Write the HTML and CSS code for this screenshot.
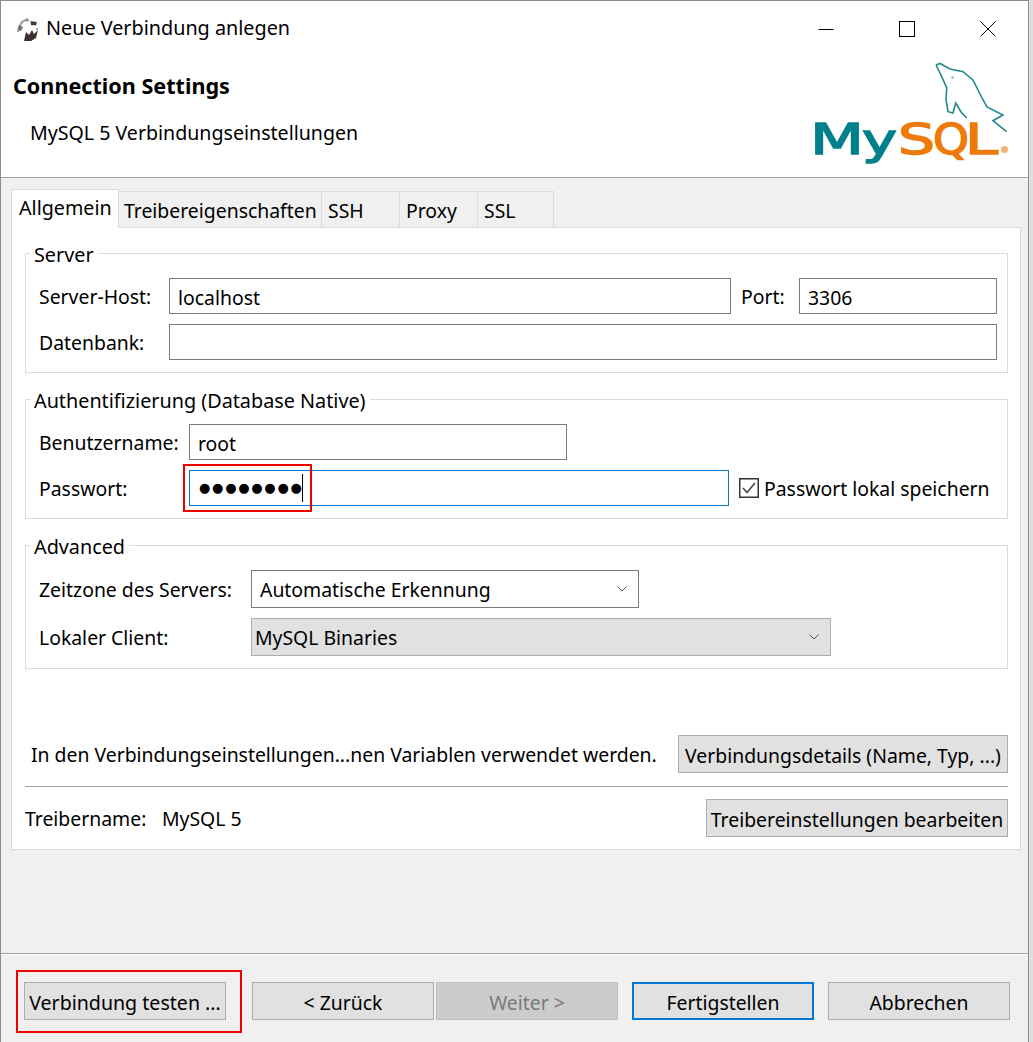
FILE: index.html
```html
<!DOCTYPE html>
<html lang="de">
<head>
<meta charset="utf-8">
<title>Neue Verbindung anlegen</title>
<link rel="stylesheet" href="styles.css">
</head>
<body>
<div class="window">
  <header class="header">
    <div class="titlebar">
      <svg class="app-icon" viewBox="0 0 24 24" width="24" height="24" aria-hidden="true">
        <path d="M3 15 L4 10 L7 5 L13 1.5" fill="none" stroke="#9a9a9a" stroke-width="2"/>
        <path d="M4 8 L8 10 L6 14 L3 13 Z" fill="#6f6f6f"/>
        <path d="M10 3 L15 3 L12 5 Z" fill="#8a8a8a"/>
        <path d="M15.5 4 L22 5 L21 8.5 L16 8 Z" fill="#45403e"/>
        <path d="M9 24 L11 15 L14 18 L17 13 L19 17 L23 13 L21 21 L16 24 Z" fill="#3b3331"/>
        <path d="M21 11 L23 11 L23 13 L21 13 Z" fill="#a9a9a9"/>
      </svg>
      <span class="title">Neue Verbindung anlegen</span>
      <div class="controls">
        <svg class="ctl" viewBox="0 0 16 16" width="16" height="16" aria-hidden="true"><path d="M0.5 8.5 H15.5" stroke="#000" fill="none"/></svg>
        <svg class="ctl" viewBox="0 0 16 16" width="16" height="16" aria-hidden="true"><rect x="0.5" y="0.5" width="15" height="15" stroke="#000" fill="none"/></svg>
        <svg class="ctl" viewBox="0 0 16 16" width="16" height="16" aria-hidden="true"><path d="M0.5 0.5 L15.5 15.5 M15.5 0.5 L0.5 15.5" stroke="#000" fill="none"/></svg>
      </div>
    </div>
    <div class="banner">
      <div class="banner-text">
        <h1 class="heading">Connection Settings</h1>
        <p class="subtitle">MySQL 5 Verbindungseinstellungen</p>
      </div>
      <svg class="logo" viewBox="810 60 202 110" width="202" height="110" aria-label="MySQL">
        <path d="M936 65 L940 63.5 L950 69 L963 71.7 L973 80 L982 98 L987 107 L1003 115 L993 120.7 L1006.7 131.7" fill="none" stroke="#1f8a8a" stroke-width="1.6"/>
        <path d="M936 65 L941 75 L946.7 88 L946 100 L948 111.7 L953 113 L955.7 103 L961 112 L966.7 118" fill="none" stroke="#1f8a8a" stroke-width="1.6"/>
        <circle cx="952.5" cy="77.5" r="1.2" fill="#6fb8b8"/>
        <text class="logo-my" x="810" y="154" textLength="54" lengthAdjust="spacingAndGlyphs">M</text>
        <text class="logo-my" x="862" y="154" textLength="35" lengthAdjust="spacingAndGlyphs">y</text>
        <text class="logo-sql" x="898" y="154" textLength="37" lengthAdjust="spacingAndGlyphs">S</text>
        <text class="logo-sql" x="933" y="154" textLength="36" lengthAdjust="spacingAndGlyphs">Q</text>
        <text class="logo-sql" x="965" y="154" textLength="33" lengthAdjust="spacingAndGlyphs">L</text>
        <circle cx="1004.5" cy="149.5" r="3.5" fill="#f3b27a"/>
      </svg>
    </div>
  </header>

  <div class="folder">
    <div class="tabs">
      <div class="tab tab-active w-general">Allgemein</div>
      <div class="tab w-driver">Treibereigenschaften</div>
      <div class="tab w-short">SSH</div>
      <div class="tab w-short">Proxy</div>
      <div class="tab w-ssl">SSL</div>
    </div>
    <div class="panel">
      <section class="group">
        <div class="legend">Server</div>
        <div class="server-grid">
          <label class="label">Server-Host:</label>
          <div class="input">localhost</div>
          <label class="label label-port">Port:</label>
          <div class="input input-port">3306</div>
          <label class="label">Datenbank:</label>
          <div class="input span-3"></div>
        </div>
      </section>

      <section class="group">
        <div class="legend">Authentifizierung (Database Native)</div>
        <div class="rows">
          <div class="row">
            <label class="label w-auth">Benutzername:</label>
            <div class="input w-user">root</div>
          </div>
          <div class="row">
            <label class="label w-auth">Passwort:</label>
            <div class="input input-focus w-pass"><span class="dots">●●●●●●●●</span><span class="caret"></span></div>
            <span class="checkbox">
              <svg viewBox="0 0 20 20" width="20" height="20" aria-hidden="true"><rect x="0.75" y="0.75" width="18.5" height="18.5" fill="#fff" stroke="#333" stroke-width="1.5"/><path d="M4 10 L8 14.5 L16 5" fill="none" stroke="#444" stroke-width="1.5"/></svg>
            </span>
            <span class="check-label">Passwort lokal speichern</span>
          </div>
        </div>
      </section>

      <section class="group">
        <div class="legend">Advanced</div>
        <div class="rows">
          <div class="row">
            <label class="label w-adv">Zeitzone des Servers:</label>
            <div class="combo w-tz">Automatische Erkennung
              <svg class="chev" viewBox="0 0 10 6" width="10" height="6" aria-hidden="true"><path d="M0.5 0.5 L5 5 L9.5 0.5" fill="none" stroke="#555"/></svg>
            </div>
          </div>
          <div class="row">
            <label class="label w-adv">Lokaler Client:</label>
            <div class="combo combo-gray w-client">MySQL Binaries
              <svg class="chev" viewBox="0 0 10 6" width="10" height="6" aria-hidden="true"><path d="M0.5 0.5 L5 5 L9.5 0.5" fill="none" stroke="#555"/></svg>
            </div>
          </div>
        </div>
      </section>

      <div class="info-row">
        <span class="info">In den Verbindungseinstellungen...nen Variablen verwendet werden.</span>
        <button class="btn w-details">Verbindungsdetails (Name, Typ, ...)</button>
      </div>
      <hr class="sep">
      <div class="driver-row">
        <span class="driver-key">Treibername:</span>
        <span class="driver-val">MySQL 5</span>
        <button class="btn w-edit">Treibereinstellungen bearbeiten</button>
      </div>
    </div>
  </div>

  <footer class="footer">
    <button class="btn w-test">Verbindung testen ...</button>
    <button class="btn w-nav m-back">&lt; Zurück</button>
    <button class="btn w-nav btn-disabled m-next">Weiter &gt;</button>
    <button class="btn w-nav btn-default m-finish">Fertigstellen</button>
    <button class="btn w-nav m-finish">Abbrechen</button>
  </footer>

  <div class="mark mark-pass"></div>
  <div class="mark mark-test"></div>
</div>
</body>
</html>
```
FILE: styles.css
```css
* { box-sizing: border-box; }
html, body { margin: 0; padding: 0; }
html { background: #dedede; }
body {
  min-width: 1033px;
  font-family: "Noto Sans", "Open Sans", sans-serif;
  font-size: 19.4px;
  color: #000;
}
.window {
  position: relative;
  width: 1029px;
  height: 1042px;
  overflow: hidden;
  background: #f0f0f0;
  border: 1px solid #8c8c8c;
  border-bottom: 0;
  display: flex;
  flex-direction: column;
}

/* header */
.header { background: #fff; border-bottom: 1px solid #a0a0a0; height: 177px; flex: none; }
.titlebar { display: flex; align-items: center; height: 56px; padding-left: 14px; }
.app-icon { flex: none; margin-right: 7px; }
.title { font-size: 19.8px; line-height: 24px; margin-top: -2px; }
.controls { margin-left: auto; display: flex; gap: 65px; padding-right: 32px; }
.ctl { display: block; }
.banner { display: flex; justify-content: space-between; height: 120px; }
.banner-text { padding: 15px 0 0 12px; }
.heading { margin: 0; font-size: 21.6px; font-weight: 700; line-height: 28px; }
.subtitle { margin: 19px 0 0 17px; line-height: 28px; font-size: 19.6px; }
.logo { margin: 3px 16px 0 0; flex: none; }
.logo text { font-family: "DejaVu Sans", sans-serif; font-size: 42px; stroke-width: 1.4px; }
.logo-my { fill: #00808a; stroke: #00808a; }
.logo-sql { fill: #ee7a0a; stroke: #ee7a0a; }

/* tabs */
.folder { margin: 11px 0 0 10px; width: 1010px; flex: none; }
.tabs { display: flex; align-items: flex-end; height: 38px; position: relative; z-index: 1; }
.tab {
  height: 36px;
  margin-bottom: 0;
  padding: 5px 0 0 6px;
  background: #f0f0f0;
  border: 1px solid #dcdcdc;
  border-left: 0;
  border-bottom: 0;
  line-height: 28px;
}
.tab-active {
  height: 39px;
  margin-bottom: -1px;
  padding: 4px 0 0 7px;
  background: #fff;
  border-left: 1px solid #dcdcdc;
}
.w-general { width: 108px; font-size: 19.7px; }
.w-driver { width: 203px; padding-left: 5px; }
.w-short { width: 78px; }
.w-ssl { width: 76px; }

.panel {
  height: 623px;
  background: #fff;
  border: 1px solid #dcdcdc;
  padding: 25px 13px 0;
}

/* groups */
.group { width: 983px; border: 1px solid #dcdcdc; padding: 0 13px 12px; margin-bottom: 26px; }
.legend {
  display: table;
  height: 28px;
  line-height: 28px;
  margin: -13px 0 9px -9px;
  padding: 0 4px;
  background: #fff;
  font-size: 19.8px;
}
.label { line-height: 38px; height: 36px; white-space: nowrap; }
.input {
  height: 36px;
  border: 1px solid #7a7a7a;
  background: #fff;
  padding-left: 8px;
  line-height: 38px;
}
.server-grid { display: grid; grid-template-columns: 130px 562px 68px 198px; gap: 10px 0; }
.label-port { padding-left: 10px; }
.span-3 { grid-column: span 3; }
.rows { display: flex; flex-direction: column; gap: 10px; }
.row { display: flex; align-items: center; }
.w-auth { width: 150px; flex: none; }
.w-user { width: 378px; }
.w-pass { width: 540px; }
.input-focus { border-color: #0078d7; display: flex; align-items: center; }
.dots { font-family: "DejaVu Sans", sans-serif; font-size: 13px; letter-spacing: 1.72px; margin-left: 1px; }
.caret { width: 1px; height: 28px; background: #000; margin-left: -2px; }
.checkbox { display: flex; margin-left: 10px; }
.check-label { margin-left: 5px; line-height: 38px; height: 36px; }
.w-adv { width: 212px; flex: none; }
.combo {
  position: relative;
  height: 38px;
  line-height: 38px;
  border: 1px solid #7a7a7a;
  background: #fff;
  padding-left: 8px;
}
.combo-gray { background: #e1e1e1; border-color: #adadad; padding-left: 3px; }
.w-tz { width: 388px; }
.w-client { width: 580px; }
.chev { position: absolute; right: 11px; top: 15px; }

/* bottom rows */
.info-row { display: flex; justify-content: space-between; align-items: center; width: 983px; margin-top: 66px; padding-left: 6px; }
.info, .driver-key, .driver-val { padding-top: 1px; }
.sep { width: 983px; height: 1px; margin: 13px 0 12px; border: 0; background: #a0a0a0; }
.driver-row { display: flex; align-items: center; width: 983px; }
.driver-key { width: 137px; }
.driver-val { flex: 1; }
.btn {
  height: 38px;
  padding: 2px 0 0;
  border: 1px solid #adadad;
  background: #e1e1e1;
  font: inherit;
  color: #000;
  white-space: nowrap;
}
.w-details { width: 330px; }
.w-edit { width: 302px; }

/* footer */
.footer {
  margin-top: 103px;
  border-top: 1px solid #a0a0a0;
  box-shadow: inset 0 1px 0 #fff;
  padding: 28px 0 0 23px;
  display: flex;
}
.w-test { width: 202px; font-size: 19.6px; }
.w-nav { width: 182px; }
.m-back { margin-left: 26px; }
.m-next { margin-left: 2px; }
.m-finish { margin-left: 14px; }
.btn-disabled { background: #ccc; border-color: #bfbfbf; color: #7a7a7a; }
.btn-default { border: 2px solid #0078d7; }

/* red annotations */
.mark { position: absolute; border: 2px solid #ee0000; }
.mark-pass { left: 182px; top: 463px; width: 129px; height: 48px; }
.mark-test { left: 15px; top: 969px; width: 226px; height: 63px; }
```
